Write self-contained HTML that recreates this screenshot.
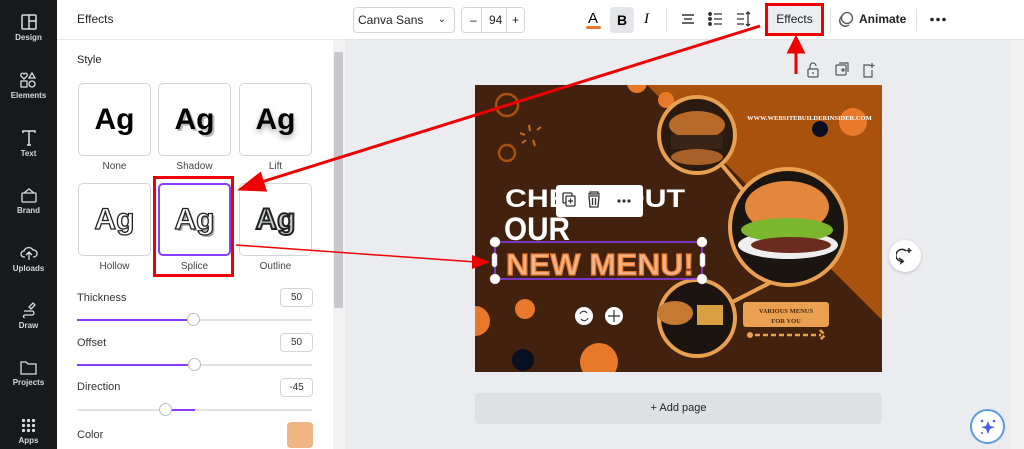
<!DOCTYPE html>
<html><head><meta charset="utf-8"><style>
*{box-sizing:border-box;margin:0;padding:0}
body{width:1024px;height:449px;overflow:hidden;font-family:"Liberation Sans",sans-serif;background:#ebecf0;position:relative}
.abs{position:absolute}
.side{left:0;top:0;width:57px;height:449px;background:#18191b}
.side .it{position:absolute;left:0;width:57px;text-align:center;color:#d8d8da;font-size:8px;font-weight:bold}
.side svg{display:block;margin:0 auto 3px}
.panel{left:57px;top:0;width:288px;height:449px;background:#fff}
.tile{position:absolute;width:73px;height:73px;border:1px solid #d4d5d8;border-radius:5px;background:#fff;display:flex;align-items:center;justify-content:center;font-size:30px;font-weight:bold}
.lbl{position:absolute;width:73px;text-align:center;font-size:10px;color:#444}
.sl{position:absolute;left:20px;width:235px;height:2px;background:#e2e2e6}
.num{position:absolute;left:223px;width:33px;height:19px;border:1px solid #d4d5d8;border-radius:4px;font-size:10px;color:#333;text-align:center;line-height:17px}
.knob{position:absolute;width:13px;height:13px;border-radius:50%;background:#fff;border:1px solid #bbb}
.top{left:345px;top:0;width:679px;height:40px;background:#fff;border-bottom:1px solid #e3e3e6}
.btn{position:absolute;top:7px;height:26px;border:1px solid #d4d5d8;border-radius:4px;font-size:12px;color:#222;line-height:24px}
</style></head><body>
<div class="abs side">
 <div class="it" style="top:14px"><svg width="16" height="16" viewBox="0 0 16 16" fill="none" stroke="#ddd" stroke-width="1.5"><rect x="1" y="1" width="14" height="14" rx="1"/><path d="M8 1v14M8 7h7"/></svg>Design</div>
 <div class="it" style="top:72px"><svg width="17" height="16" viewBox="0 0 17 16" fill="none" stroke="#ddd" stroke-width="1.3"><path d="M4 7L1 4a1.8 1.8 0 013-2 1.8 1.8 0 013 2z"/><path d="M12 1l3 5h-6z"/><rect x="1" y="9" width="6" height="6"/><circle cx="12" cy="12" r="3"/></svg>Elements</div>
 <div class="it" style="top:130px"><svg width="16" height="16" viewBox="0 0 16 16" fill="none" stroke="#ddd" stroke-width="1.5"><path d="M2 3V1h12v2M8 1v14M6 15h4"/></svg>Text</div>
 <div class="it" style="top:187px"><svg width="16" height="16" viewBox="0 0 16 16" fill="none" stroke="#ddd" stroke-width="1.3"><rect x="1" y="6" width="14" height="9" rx="1"/><path d="M3 6l5-4 5 4"/></svg>Brand</div>
 <div class="it" style="top:245px"><svg width="18" height="16" viewBox="0 0 18 16" fill="none" stroke="#ddd" stroke-width="1.3"><path d="M5 12H4a3 3 0 010-6 5 5 0 019-1 3.5 3.5 0 011 7h-1M9 15V8M6 10l3-3 3 3"/></svg>Uploads</div>
 <div class="it" style="top:302px"><svg width="16" height="16" viewBox="0 0 16 16" fill="none" stroke="#ddd" stroke-width="1.3"><path d="M10 7l4-4-2-2-4 4zM3 9h8a2 2 0 010 4H4a1.5 1.5 0 000 3"/></svg>Draw</div>
 <div class="it" style="top:360px"><svg width="17" height="15" viewBox="0 0 17 15" fill="none" stroke="#ddd" stroke-width="1.3"><path d="M1 2h5l2 2h8v10H1z"/></svg>Projects</div>
 <div class="it" style="top:418px"><svg width="15" height="15" viewBox="0 0 15 15" fill="#ddd"><circle cx="2.5" cy="2.5" r="1.6"/><circle cx="7.5" cy="2.5" r="1.6"/><circle cx="12.5" cy="2.5" r="1.6"/><circle cx="2.5" cy="7.5" r="1.6"/><circle cx="7.5" cy="7.5" r="1.6"/><circle cx="12.5" cy="7.5" r="1.6"/><circle cx="2.5" cy="12.5" r="1.6"/><circle cx="7.5" cy="12.5" r="1.6"/><circle cx="12.5" cy="12.5" r="1.6"/></svg>Apps</div>
</div>
<div class="abs panel">
 <div class="abs" style="left:20px;top:12px;font-size:12px;color:#222">Effects</div>
 <div class="abs" style="left:0;top:39px;width:288px;height:1px;background:#e6e6e8"></div>
 <div class="abs" style="left:20px;top:54px;font-size:11px;color:#222">Style</div>
 <div class="tile" style="left:21px;top:83px">Ag</div>
 <div class="tile" style="left:101px;top:83px;text-shadow:2px 2px 0 #bbb">Ag</div>
 <div class="tile" style="left:182px;top:83px;text-shadow:0 3px 6px rgba(0,0,0,.35)">Ag</div>
 <div class="lbl" style="left:21px;top:161px">None</div>
 <div class="lbl" style="left:101px;top:161px">Shadow</div>
 <div class="lbl" style="left:182px;top:161px">Lift</div>
 <div class="tile" style="left:21px;top:183px;color:#fff;-webkit-text-stroke:1.3px #222">Ag</div>
 <div class="tile" style="left:101px;top:183px;border:2px solid #8b3dff;color:#fff;-webkit-text-stroke:1.3px #222;text-shadow:2px 2px 0 #aaa">Ag</div>
 <div class="tile" style="left:182px;top:183px;color:#c7c9cc;-webkit-text-stroke:2px #222">Ag</div>
 <div class="lbl" style="left:21px;top:261px">Hollow</div>
 <div class="lbl" style="left:101px;top:261px">Splice</div>
 <div class="lbl" style="left:182px;top:261px">Outline</div>
 <div class="abs" style="left:96px;top:176px;width:81px;height:101px;border:3px solid #e00"></div>
 <div class="abs" style="left:20px;top:292px;font-size:11px;color:#333">Thickness</div>
 <div class="num" style="top:288px">50</div>
 <div class="sl" style="top:319px"></div><div class="sl" style="top:319px;width:117px;background:#8b3dff"></div><div class="knob" style="left:130px;top:313px"></div>
 <div class="abs" style="left:20px;top:337px;font-size:11px;color:#333">Offset</div>
 <div class="num" style="top:333px">50</div>
 <div class="sl" style="top:364px"></div><div class="sl" style="top:364px;width:118px;background:#8b3dff"></div><div class="knob" style="left:131px;top:358px"></div>
 <div class="abs" style="left:20px;top:381px;font-size:11px;color:#333">Direction</div>
 <div class="num" style="top:378px">-45</div>
 <div class="sl" style="top:409px"></div><div class="sl" style="top:409px;left:108px;width:30px;background:#8b3dff"></div><div class="knob" style="left:102px;top:403px"></div>
 <div class="abs" style="left:20px;top:429px;font-size:11px;color:#333">Color</div>
 <div class="abs" style="left:230px;top:422px;width:26px;height:26px;border-radius:4px;background:#f0b585"></div>
 <div class="abs" style="left:276px;top:40px;width:12px;height:409px;background:#f3f3f4"></div>
 <div class="abs" style="left:277px;top:52px;width:9px;height:256px;background:#c8c8cb;border-radius:2px"></div>
</div>
<div class="abs top">
 <div class="btn" style="left:8px;width:102px;padding-left:4px">Canva Sans<span style="position:absolute;right:8px;top:0;font-size:10px">&#8964;</span></div>
 <div class="btn" style="left:116px;width:64px"><span style="position:absolute;left:8px">–</span><span style="position:absolute;left:19px;width:1px;height:24px;background:#d4d5d8"></span><span style="position:absolute;left:27px">94</span><span style="position:absolute;left:44px;width:1px;height:24px;background:#d4d5d8"></span><span style="position:absolute;left:50px">+</span></div>
 <div class="abs" style="left:243px;top:10px;font-size:15px">A</div><div class="abs" style="left:241px;top:26px;width:15px;height:3px;background:#e87a30;border-radius:2px"></div>
 <div class="abs" style="left:265px;top:7px;width:24px;height:26px;background:#e4e5e8;border-radius:4px;font-weight:bold;font-size:14px;text-align:center;line-height:26px">B</div>
 <div class="abs" style="left:299px;top:11px;font-style:italic;font-size:15px;font-family:'Liberation Serif',serif">I</div>
 <div class="abs" style="left:321px;top:9px;width:1px;height:22px;background:#e0e0e3"></div>
 <svg class="abs" style="left:336px;top:13px" width="14" height="13" stroke="#333" stroke-width="1.4"><path d="M1 2h12M3 6h8M1 10h12"/></svg>
 <svg class="abs" style="left:363px;top:12px" width="14" height="14" fill="#333" stroke="#333" stroke-width="1.3"><circle cx="2" cy="2" r="1.3"/><circle cx="2" cy="7" r="1.3"/><circle cx="2" cy="12" r="1.3"/><path d="M6 2h8M6 7h8M6 12h8"/></svg>
 <svg class="abs" style="left:391px;top:11px" width="16" height="16" fill="none" stroke="#333" stroke-width="1.3"><path d="M1 3h7M1 8h7M1 13h7M12 1v14M10 3l2-2 2 2M10 13l2 2 2-2"/></svg>
 <div class="abs" style="left:420px;top:3px;width:59px;height:33px;border:3px solid #e00;background:#eceef1;font-size:12px;text-align:center;line-height:27px;color:#222">Effects</div>
 <div class="abs" style="left:485px;top:9px;width:1px;height:22px;background:#e0e0e3"></div>
 <svg class="abs" style="left:493px;top:11px" width="16" height="16" fill="none" stroke="#555" stroke-width="1.3"><circle cx="9" cy="7" r="5.5"/><path d="M4 5a5.5 5.5 0 007 9M2 8a5.5 5.5 0 007 7"/></svg>
 <div class="abs" style="left:514px;top:12px;font-size:12px;font-weight:bold;color:#222">Animate</div>
 <div class="abs" style="left:571px;top:9px;width:1px;height:22px;background:#e0e0e3"></div>
 <svg class="abs" style="left:585px;top:17px" width="16" height="5" fill="#222"><circle cx="2" cy="2.5" r="1.8"/><circle cx="8" cy="2.5" r="1.8"/><circle cx="14" cy="2.5" r="1.8"/></svg>
</div>
<div class="abs" style="left:1011px;top:40px;width:13px;height:409px;background:#f2f2f3"></div>
<svg class="abs" style="left:806px;top:62px" width="72" height="16" fill="none" stroke="#555" stroke-width="1.2"><rect x="2" y="7" width="10" height="8" rx="1"/><path d="M4 7V4a3 3 0 016 0M7 10v2"/><rect x="30" y="3" width="10" height="10" rx="1"/><path d="M33 1h9v9M35 8h4M37 6v4"/><path d="M66 8v7H58V3h6M66 1v5M63.5 3.5h5"/></svg>
<svg class="abs" style="left:475px;top:85px" width="407" height="287" viewBox="0 0 407 287">
 <rect width="407" height="287" fill="#42220e"/>
 <polygon points="172,0 407,0 407,235" fill="#a9520d"/>
 <circle cx="162" cy="-2" r="10" fill="#e8782a"/><circle cx="191" cy="15" r="8" fill="#e8782a"/>
 <circle cx="378" cy="37" r="14" fill="#e8782a"/><circle cx="345" cy="44" r="8" fill="#0a0f24"/>
 <circle cx="32" cy="20" r="11" fill="none" stroke="#a9520d" stroke-width="2.5"/><circle cx="32" cy="68" r="8" fill="none" stroke="#a9520d" stroke-width="2.5"/>
 <path d="M54 40l1 6M45 48l5 2M62 45l4-3M58 55l2 6M47 58l4-3" stroke="#c86a1c" stroke-width="2"/>
 <circle cx="50" cy="224" r="10" fill="#e8782a"/><circle cx="0" cy="236" r="15" fill="#e8782a"/>
 <circle cx="48" cy="275" r="11" fill="#0a0f24"/><circle cx="124" cy="277" r="19" fill="#e8782a"/>
 <path d="M222 50L330 180L222 235" stroke="#e9a050" stroke-width="4" fill="none"/>
 <circle cx="222" cy="50" r="38" fill="#2a1a10" stroke="#e9a050" stroke-width="4"/>
 <ellipse cx="222" cy="40" rx="28" ry="14" fill="#b86a2a"/><rect x="196" y="50" width="52" height="14" fill="#3a2418"/><ellipse cx="222" cy="72" rx="26" ry="8" fill="#a86028"/>
 <circle cx="313" cy="142" r="58" fill="#1b1512" stroke="#e9a050" stroke-width="4"/>
 <ellipse cx="313" cy="160" rx="50" ry="14" fill="#eee"/><ellipse cx="312" cy="122" rx="42" ry="26" fill="#e2873c"/><ellipse cx="312" cy="145" rx="46" ry="12" fill="#7cb52e"/><ellipse cx="316" cy="160" rx="40" ry="8" fill="#6b2c20"/>
 <circle cx="222" cy="233" r="38" fill="#1c1410" stroke="#e9a050" stroke-width="4"/>
 <ellipse cx="200" cy="228" rx="18" ry="12" fill="#c47a30"/><rect x="222" y="220" width="26" height="20" fill="#d8a040"/>
 <rect x="268" y="217" width="86" height="25" rx="3" fill="#e9a050"/>
 <text x="311" y="228" font-family="Liberation Serif,serif" font-size="6.5" font-weight="bold" fill="#4a2a10" text-anchor="middle">VARIOUS MENUS</text>
 <text x="311" y="238" font-family="Liberation Serif,serif" font-size="6.5" font-weight="bold" fill="#4a2a10" text-anchor="middle">FOR YOU</text>
 <circle cx="275" cy="250" r="3" fill="#e9a050"/><path d="M280 250h66M345 245l5 5-5 5" stroke="#e9a050" stroke-width="2.5" stroke-dasharray="5 3" fill="none"/>
 <text x="272" y="35" font-family="Liberation Serif,serif" font-size="6.5" font-weight="bold" fill="#fff">WWW.WEBSITEBUILDERINSIDER.COM</text>
 <text x="30" y="122" font-family="Liberation Sans Narrow,Liberation Sans,sans-serif" font-size="25" font-weight="bold" fill="#fff" textLength="180" lengthAdjust="spacingAndGlyphs">CHECK OUT</text>
 <text x="29" y="155" font-family="Liberation Sans,sans-serif" font-size="32" font-weight="bold" fill="#fff" textLength="66" lengthAdjust="spacingAndGlyphs">OUR</text>
 <text x="31" y="190" font-family="Liberation Sans,sans-serif" font-size="31" font-weight="bold" fill="#f3b48a" stroke="#e8782a" stroke-width="1.2" textLength="188" lengthAdjust="spacingAndGlyphs">NEW MENU!</text>
 <rect x="81" y="100" width="87" height="32" rx="3" fill="#fff"/>
 <g stroke="#333" stroke-width="1.3" fill="none"><rect x="88" y="108" width="9" height="10" rx="1"/><rect x="91" y="111" width="9" height="10" rx="1" fill="#fff"/><path d="M95.5 113.5v5M93 116h5"/><path d="M113 109h12M115 109v-2h8v2M114 111h10l-1 11h-8zM117.5 113v7M120.5 113v7"/></g>
 <g fill="#333"><circle cx="144" cy="116" r="1.6"/><circle cx="149" cy="116" r="1.6"/><circle cx="154" cy="116" r="1.6"/></g>
 <rect x="20" y="157" width="207" height="37" fill="none" stroke="#8b3dff" stroke-width="1.5"/>
 <g fill="#fff" stroke="#ccc" stroke-width="0.5"><circle cx="20" cy="157" r="5"/><circle cx="227" cy="157" r="5"/><circle cx="20" cy="194" r="5"/><circle cx="227" cy="194" r="5"/><rect x="17" y="168" width="5" height="14" rx="2.5"/><rect x="225" y="168" width="5" height="14" rx="2.5"/></g>
 <circle cx="109" cy="231" r="9" fill="#fff"/><circle cx="139" cy="231" r="9" fill="#fff"/>
 <path d="M105 229a4 4 0 017-1M113 233a4 4 0 01-7 1" stroke="#333" stroke-width="1.1" fill="none"/>
 <path d="M139 225v12M133 231h12" stroke="#333" stroke-width="1.2"/>
</svg>
<div class="abs" style="left:475px;top:393px;width:407px;height:31px;background:#dfe0e4;border-radius:4px;font-size:11px;text-align:center;line-height:31px;color:#222">+ Add page</div>
<div class="abs" style="left:889px;top:240px;width:32px;height:32px;border-radius:50%;background:#fff;box-shadow:0 1px 3px rgba(0,0,0,.2)"></div>
<svg class="abs" style="left:896px;top:247px" width="18" height="18" fill="none" stroke="#222" stroke-width="1.4"><path d="M10 4a6 6 0 10-2 10l-3 2 1-3a6 6 0 01-3-2M13 1v5M10.5 3.5h5"/></svg>
<div class="abs" style="left:970px;top:409px;width:35px;height:35px;border-radius:50%;background:#fff;border:2px solid #5b9be0"></div>
<svg class="abs" style="left:978px;top:417px" width="20" height="20" fill="#4a5de8"><path d="M10 4l2 5 5 1-5 2-2 5-2-5-5-2 5-1z"/><circle cx="4" cy="4" r="1.3"/><circle cx="16" cy="4" r="1.3"/><circle cx="4" cy="16" r="1"/></svg>
<svg class="abs" style="left:0;top:0" width="1024" height="449">
 <g stroke="#e00" stroke-width="3" fill="#e00">
  <line x1="760" y1="26" x2="255" y2="184"/><polygon points="241,189 260,174 265,190"/>
  <line x1="796" y1="74" x2="796" y2="50"/><polygon points="796,38 789,52 803,52"/>
 </g>
 <line x1="236" y1="245" x2="476" y2="262" stroke="#e00" stroke-width="1.5"/>
 <polygon points="490,262 472,255 472,269" fill="#e00"/>
</svg>
</body></html>
